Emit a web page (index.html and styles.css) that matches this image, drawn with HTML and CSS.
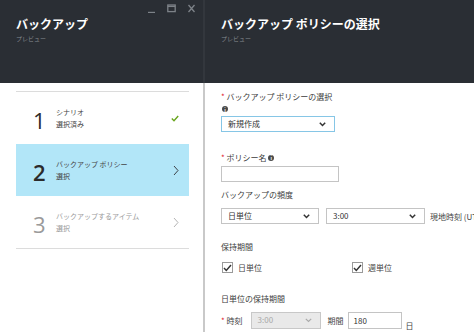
FILE: index.html
```html
<!DOCTYPE html>
<html lang="ja">
<head>
    <meta charset="UTF-8">
    <meta name="viewport" content="width=device-width, initial-scale=1.0">
    <link rel="stylesheet" href="styles.css">
    <title>バックアップ</title>
</head>
<body>
<div class="page">
    <section class="blade blade-steps">
        <header class="blade-head">
            <div class="win-controls">
                <svg width="9" height="9" viewBox="0 0 9 9"><path d="M1 8.5h7" stroke="#7d8288" stroke-width="1.4"/></svg>
                <svg width="9" height="9" viewBox="0 0 9 9"><rect x="0.8" y="1" width="7.4" height="6.6" fill="none" stroke="#7d8288" stroke-width="1.3"/><path d="M0.8 2.4h7.4" stroke="#7d8288" stroke-width="1.3"/></svg>
                <svg width="9" height="9" viewBox="0 0 9 9"><path d="M1.5 1l6 7M7.5 1l-6 7" stroke="#7d8288" stroke-width="1.3"/></svg>
            </div>
            <h1 class="blade-title">バックアップ</h1>
            <div class="blade-sub">プレビュー</div>
        </header>
        <div class="blade-body">
            <ul class="steps">
                <li class="step">
                    <span class="step-num">1</span>
                    <span class="step-text"><span>シナリオ</span><span>選択済み</span></span>
                    <svg class="step-icon" width="8" height="7" viewBox="0 0 8 7"><path d="M0.8 3.6l2.2 2.2 4.2-4.8" fill="none" stroke="#68a51c" stroke-width="1.4"/></svg>
                </li>
                <li class="step active">
                    <span class="step-num">2</span>
                    <span class="step-text"><span>バックアップ ポリシー</span><span>選択</span></span>
                    <svg class="step-icon" width="6" height="11" viewBox="0 0 6 11"><path d="M1 1l4 4.5-4 4.5" fill="none" stroke="#3b4046" stroke-width="1"/></svg>
                </li>
                <li class="step muted">
                    <span class="step-num">3</span>
                    <span class="step-text"><span>バックアップするアイテム</span><span>選択</span></span>
                    <svg class="step-icon" width="6" height="11" viewBox="0 0 6 11"><path d="M1 1l4 4.5-4 4.5" fill="none" stroke="#b4b4b4" stroke-width="1"/></svg>
                </li>
            </ul>
        </div>
    </section>

    <section class="blade blade-policy">
        <header class="blade-head">
            <h1 class="blade-title">バックアップ ポリシーの選択</h1>
            <div class="blade-sub">プレビュー</div>
        </header>
        <div class="blade-body form">
            <div class="label"><span class="req">*</span> バックアップ ポリシーの選択</div>
            <div class="info-line"><span class="info">i</span></div>
            <div class="select focus sel-policy">新規作成
                <svg class="chev" width="7" height="5" viewBox="0 0 7 5"><path d="M0.8 0.8l2.7 2.7 2.7-2.7" fill="none" stroke="#333" stroke-width="1.5"/></svg>
            </div>

            <div class="label gap-lg"><span class="req">*</span> ポリシー名 <span class="info">i</span></div>
            <div class="textbox tb-name"></div>

            <div class="label gap-sm">バックアップの頻度</div>
            <div class="row freq">
                <div class="select sel-freq">日単位
                    <svg class="chev" width="7" height="5" viewBox="0 0 7 5"><path d="M0.8 0.8l2.7 2.7 2.7-2.7" fill="none" stroke="#333" stroke-width="1.5"/></svg>
                </div>
                <div class="select sel-time">3:00
                    <svg class="chev" width="7" height="5" viewBox="0 0 7 5"><path d="M0.8 0.8l2.7 2.7 2.7-2.7" fill="none" stroke="#333" stroke-width="1.5"/></svg>
                </div>
                <span class="note">現地時刻 (UTC+09:00)</span>
            </div>

            <div class="label gap-md">保持期間</div>
            <div class="row checks">
                <label class="check"><span class="box"><svg width="9" height="8" viewBox="0 0 9 8"><path d="M1 4l2.3 2.4 4.7-5.4" fill="none" stroke="#333" stroke-width="1.5"/></svg></span>日単位</label>
                <label class="check"><span class="box"><svg width="9" height="8" viewBox="0 0 9 8"><path d="M1 4l2.3 2.4 4.7-5.4" fill="none" stroke="#333" stroke-width="1.5"/></svg></span>週単位</label>
            </div>

            <div class="label gap-lg">日単位の保持期間</div>
            <div class="row retain">
                <span class="inline-label"><span class="req">*</span> 時刻</span>
                <div class="select disabled sel-retain">3:00
                    <svg class="chev" width="7" height="5" viewBox="0 0 7 5"><path d="M0.8 0.8l2.7 2.7 2.7-2.7" fill="none" stroke="#aaa" stroke-width="1.2"/></svg>
                </div>
                <span class="inline-label">期間</span>
                <div class="textbox tb-days">180</div>
                <span class="unit">日</span>
            </div>
        </div>
    </section>
</div>
</body>
</html>
```

FILE: styles.css
```css
body {
    margin: 0;
    background: #ffffff;
    font-family: "Noto Sans CJK JP", "Noto Sans", sans-serif;
    color: #333;
}

.page {
    display: flex;
    width: 474px;
    height: 332px;
    overflow: hidden;
}

.blade {
    display: flex;
    flex-direction: column;
}

.blade-steps {
    width: 205px;
    flex-shrink: 0;
}

.blade-policy {
    flex: 1;
    min-width: 0;
    overflow: hidden;
}

.blade-head {
    height: 83px;
    box-sizing: border-box;
    background: #2a2e34;
    padding: 16px 16px 0 16px;
}

.blade-steps .blade-head {
    padding-top: 4px;
    border-right: 2px solid #33373d;
}

.win-controls {
    display: flex;
    justify-content: flex-end;
    gap: 11px;
    height: 9px;
    margin-right: -9px;
    margin-bottom: 3px;
}

.blade-title {
    margin: 0;
    color: #ffffff;
    font-size: 12px;
    line-height: 16px;
    font-weight: bold;
    white-space: nowrap;
}

.blade-sub {
    margin-top: 3px;
    color: #868b91;
    font-size: 6px;
    line-height: 8px;
}

.blade-body {
    flex: 1;
    padding-top: 8px;
}

.blade-steps .blade-body {
    border-right: 2px solid #c9c9c9;
    padding-left: 16px;
    padding-right: 14px;
}

.steps {
    list-style: none;
    margin: 0;
    padding: 0;
    border-top: 1px solid #dcdcdc;
    border-bottom: 1px solid #dcdcdc;
}

.step {
    display: flex;
    align-items: center;
    height: 52px;
    padding: 0 10px 0 17px;
}

.step.active {
    background: #b2e6f8;
}

.step-num {
    width: 23px;
    font-family: "Open Sans", sans-serif;
    font-size: 22px;
    line-height: 26px;
    color: #2b2b2b;
    margin-top: 4px;
}

.step.active .step-num {
    font-weight: 600;
}

.step-text {
    flex: 1;
    display: flex;
    flex-direction: column;
    font-size: 7px;
    line-height: 12px;
    color: #444;
}

.step.muted .step-num,
.step.muted .step-text {
    color: #9a9a9a;
}

.form {
    padding-left: 16px;
    font-size: 8px;
}

.label {
    font-size: 8px;
    line-height: 12px;
    color: #3c3c3c;
    white-space: nowrap;
}

.req {
    color: #e0202a;
}

.gap-sm {
    margin-top: 7px;
}

.gap-md {
    margin-top: 17px;
}

.gap-lg {
    margin-top: 20px;
}

.info-line {
    height: 12px;
    display: flex;
    align-items: center;
    padding-left: 1px;
}

.info {
    display: inline-flex;
    justify-content: center;
    align-items: center;
    width: 6px;
    height: 6px;
    border-radius: 50%;
    background: #4a4a4a;
    color: #fff;
    font-size: 5px;
    font-weight: bold;
    vertical-align: 1px;
}

.select {
    position: relative;
    box-sizing: border-box;
    flex-shrink: 0;
    height: 16px;
    border: 1px solid #c4c4c4;
    background: #fff;
    font-size: 8px;
    line-height: 14px;
    padding-left: 6px;
    color: #333;
}

.select .chev {
    position: absolute;
    right: 8px;
    top: 5px;
}

.select.focus {
    border-color: #86c6e6;
}

.select.disabled {
    background: #e9e9e9;
    border-color: #c8c8c8;
    color: #a8a8a8;
}

.sel-policy {
    width: 114px;
    margin-top: 1px;
}

.textbox {
    box-sizing: border-box;
    flex-shrink: 0;
    height: 16px;
    border: 1px solid #c4c4c4;
    background: #fff;
    font-size: 8px;
    line-height: 14px;
    padding-left: 5px;
}

.tb-name {
    width: 118px;
    margin-top: 2px;
}

.row {
    display: flex;
    align-items: center;
    white-space: nowrap;
}

.row > * {
    flex-shrink: 0;
}

.freq {
    margin-top: 7px;
    gap: 7px;
}

.sel-freq {
    width: 98px;
}

.sel-time {
    width: 99px;
}

.note {
    margin-left: -2px;
    font-size: 8px;
    color: #444;
}

.checks {
    margin-top: 9px;
    padding-left: 1px;
}

.check {
    display: flex;
    align-items: center;
    width: 130px;
    font-size: 8px;
    color: #444;
}

.box {
    display: flex;
    justify-content: center;
    align-items: center;
    box-sizing: border-box;
    width: 11px;
    height: 11px;
    border: 1px solid #9a9a9a;
    margin-right: 5px;
    background: #fff;
}

.retain {
    margin-top: 7px;
    align-items: flex-end;
}

.inline-label {
    font-size: 8px;
    line-height: 16px;
    color: #444;
}

.sel-retain {
    width: 70px;
    height: 17px;
    margin: 0 7px 0 8px;
}

.tb-days {
    width: 54px;
    height: 17px;
    margin-left: 4px;
    line-height: 15px;
}

.unit {
    font-size: 8px;
    line-height: 10px;
    margin-left: 4px;
    margin-bottom: -2px;
    color: #444;
}
```
